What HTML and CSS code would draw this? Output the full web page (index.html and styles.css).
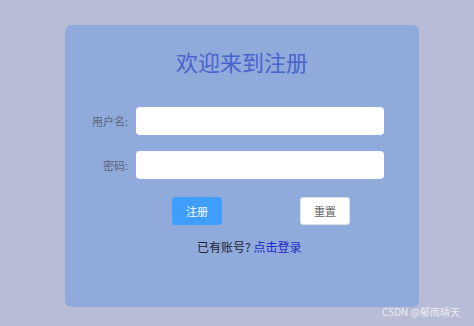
FILE: index.html
```html
<!DOCTYPE html>
<html lang="zh">
<head>
<meta charset="utf-8">
<link rel="stylesheet" href="styles.css">
</head>
<body>
<div class="page">
  <div class="card">
    <h1 class="title">欢迎来到注册</h1>
    <div class="row">
      <label class="label">用户名:</label>
      <div class="input"></div>
    </div>
    <div class="row row2">
      <label class="label">密码:</label>
      <div class="input"></div>
    </div>
    <div class="buttons">
      <button class="btn btn-primary">注册</button>
      <button class="btn btn-default">重置</button>
    </div>
    <p class="login">已有账号? <a class="link">点击登录</a></p>
  </div>
  <div class="watermark">CSDN @郁雨晴天</div>
</div>
</body>
</html>
```
FILE: styles.css
```css
html, body {
  margin: 0;
  padding: 0;
  width: 474px;
  height: 326px;
  overflow: hidden;
  background: #b8bcd6;
  font-family: "Noto Sans CJK SC", "Noto Sans", sans-serif;
}
.page {
  position: relative;
  width: 474px;
  height: 326px;
  padding-top: 25px;
  box-sizing: border-box;
}
.card {
  margin-left: 65px;
  width: 354px;
  height: 282px;
  background: #8faadb;
  border-radius: 6px;
  padding-top: 21px;
  box-sizing: border-box;
}
.title {
  margin: 0;
  font-size: 22px;
  line-height: 30px;
  font-weight: 400;
  color: #4a63cb;
  text-align: center;
}
.row {
  display: flex;
  align-items: center;
  margin-top: 31px;
}
.row2 {
  margin-top: 16px;
}
.label {
  width: 63px;
  margin-right: 8px;
  text-align: right;
  font-size: 11px;
  color: #5b6475;
}
.input {
  width: 248px;
  height: 28px;
  background: #fff;
  border-radius: 4px;
}
.buttons {
  display: flex;
  gap: 78px;
  margin-top: 18px;
  padding-left: 107px;
}
.btn {
  width: 50px;
  height: 28px;
  border-radius: 3px;
  font-family: inherit;
  font-size: 11px;
  padding: 0;
  cursor: pointer;
}
.btn-primary {
  background: #409eff;
  color: #fff;
  border: 1px solid #409eff;
}
.btn-default {
  background: #fff;
  color: #606266;
  border: 1px solid #dcdfe6;
}
.login {
  margin: 13px 0 0 132px;
  font-size: 12px;
  line-height: 18px;
  color: #1f2330;
}
.link {
  color: #1d2bc4;
}
.watermark {
  position: absolute;
  right: 14px;
  bottom: 7px;
  font-size: 10px;
  color: rgba(255,255,255,0.75);
}
```
